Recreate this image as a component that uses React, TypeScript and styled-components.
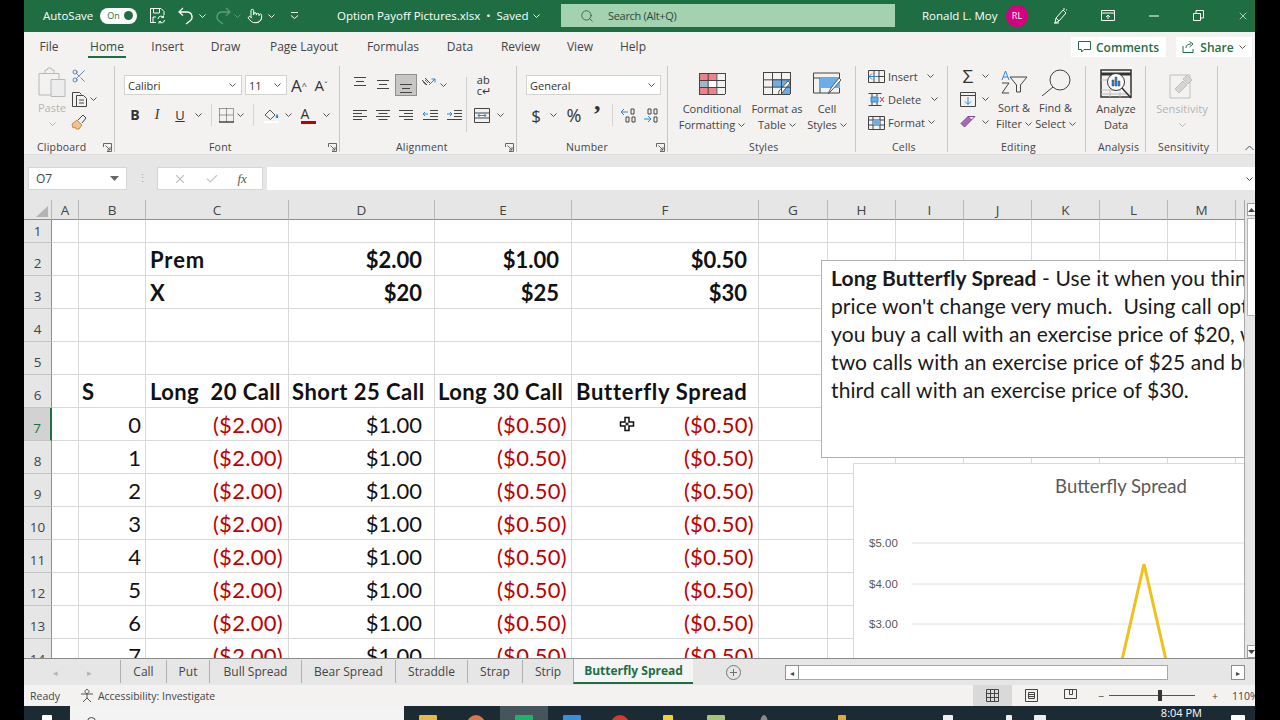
import styled, { createGlobalStyle } from "styled-components";
import { Check, Plus, Pointer, Scissors, Search, X } from "lucide-react";
import type { ReactNode } from "react";

const Global = createGlobalStyle`
html, body { margin: 0; padding: 0; background: #000; }
* { box-sizing: border-box; }
`;

const ui = `"Open Sans", "Noto Sans", "Liberation Sans", sans-serif`;
const sheetFont = `Lato, "Open Sans", sans-serif`;

const Screen = styled.div`
  width: 1280px;
  height: 720px;
  background: #000;
  padding: 0 25px 0 24px;
  overflow: hidden;
  font-family: ${ui};
`;

const Excel = styled.div`
  display: flex;
  flex-direction: column;
  width: 1231px;
  height: 720px;
  background: #f3f2f1;
`;

/* title bar */
const TitleBar = styled.div`
  display: flex;
  align-items: center;
  flex: 0 0 32px;
  padding-bottom: 1px;
  background: #1f6e43;
  color: #fff;
  font-size: 11.5px;
`;

const QuickAccess = styled.div`
  display: flex;
  align-items: center;
  width: 313px;
  padding-left: 19px;
`;

const Toggle = styled.div`
  display: flex;
  align-items: center;
  justify-content: space-between;
  width: 37px;
  height: 16px;
  margin: 0 12px 0 7px;
  padding: 0 4px 0 7px;
  border-radius: 8px;
  background: #fff;
  color: #1f6e43;
  font-size: 9px;
`;

const ToggleKnob = styled.span`
  width: 9px;
  height: 9px;
  border-radius: 50%;
  background: #1f6e43;
`;

const Slot = styled.div<{ $w: number; $ml?: number }>`
  display: flex;
  align-items: center;
  justify-content: center;
  flex: 0 0 ${(p) => p.$w}px;
  width: ${(p) => p.$w}px;
  margin-left: ${(p) => p.$ml ?? 0}px;
`;

const FileName = styled.div`
  display: flex;
  align-items: center;
  gap: 5px;
  width: 224px;
  white-space: pre;
`;

const SearchBox = styled.div`
  display: flex;
  align-items: center;
  gap: 14px;
  width: 334px;
  height: 23px;
  padding-left: 19px;
  background: #a3d2b1;
  color: #2c4a38;
  font-size: 11px;
  letter-spacing: -0.3px;
`;

const UserName = styled.div`
  width: 84px;
  margin-left: 27px;
  white-space: nowrap;
`;

const Avatar = styled.div`
  display: flex;
  align-items: center;
  justify-content: center;
  width: 22px;
  height: 22px;
  border-radius: 50%;
  background: #d6007f;
  font-size: 9px;
`;

/* tabs */
const TabRow = styled.div`
  display: flex;
  flex: 0 0 30px;
  padding-top: 5px;
  color: #444;
  font-size: 12px;
`;

const Tab = styled.div<{ $w: number; $active?: boolean }>`
  width: ${(p) => p.$w}px;
  height: 21px;
  padding-top: 1px;
  text-align: center;
  color: ${(p) => (p.$active ? "#2f4f3c" : "#444")};
  font-weight: ${(p) => (p.$active ? 500 : 400)};
  white-space: nowrap;
`;

const ActiveMark = styled.div`
  width: 38px;
  height: 2px;
  margin: 1px auto 0;
  background: #1f6e43;
`;

const TabActions = styled.div`
  display: flex;
  gap: 10px;
  margin-left: auto;
  padding-right: 3px;
`;

const ActionButton = styled.div<{ $w: number }>`
  display: flex;
  align-items: center;
  justify-content: center;
  gap: 5px;
  width: ${(p) => p.$w}px;
  height: 20px;
  background: #fff;
  color: #1f6e43;
  font-size: 12px;
  font-weight: 600;
`;

/* ribbon */
const Ribbon = styled.div`
  display: flex;
  flex: 0 0 93px;
  color: #444;
  font-size: 11px;
  border-bottom: 1px solid #dcdcdc;
`;

const Group = styled.div<{ $w: number }>`
  position: relative;
  display: flex;
  flex-direction: column;
  flex: 0 0 ${(p) => p.$w}px;
  &::after {
    content: "";
    position: absolute;
    right: 0;
    top: 4px;
    bottom: 2px;
    width: 1px;
    background: #c8c8c8;
  }
`;

const GroupBody = styled.div<{ $pl?: number; $pt?: number }>`
  display: flex;
  flex: 1;
  padding: ${(p) => p.$pt ?? 4}px 0 0 ${(p) => p.$pl ?? 0}px;
`;

const GroupLabel = styled.div<{ $left: number }>`
  display: grid;
  grid-template-columns: ${(p) => p.$left}px auto 1fr;
  align-items: center;
  height: 18px;
  padding: 4px 3px 0 0;
  font-size: 10.5px;
  letter-spacing: 0.2px;
  color: #444;
`;

const LabelEnd = styled.span`
  display: flex;
  justify-content: flex-end;
`;

const Rows = styled.div<{ $gap?: number }>`
  display: flex;
  flex-direction: column;
  gap: ${(p) => p.$gap ?? 0}px;
`;

const Row = styled.div`
  display: flex;
  align-items: center;
  height: 22px;
`;

const Tool = styled.div<{ $w: number; $on?: boolean }>`
  display: flex;
  align-items: center;
  justify-content: center;
  flex: 0 0 ${(p) => p.$w}px;
  height: 22px;
  background: ${(p) => (p.$on ? "#c8c6c4" : "transparent")};
  border: ${(p) => (p.$on ? "1px solid #8f8f8f" : "none")};
`;

const ToolText = styled.span<{ $size?: number; $bold?: boolean; $italic?: boolean; $under?: boolean; $font?: string }>`
  font-family: ${(p) => p.$font ?? ui};
  font-size: ${(p) => p.$size ?? 12}px;
  font-weight: ${(p) => (p.$bold ? 700 : 400)};
  font-style: ${(p) => (p.$italic ? "italic" : "normal")};
  text-decoration: ${(p) => (p.$under ? "underline" : "none")};
  color: #333;
  line-height: 1;
`;

const Divider = styled.div<{ $w: number }>`
  display: flex;
  justify-content: center;
  flex: 0 0 ${(p) => p.$w}px;
  height: 22px;
  &::before {
    content: "";
    width: 1px;
    background: #d4d4d4;
  }
`;

const VDivider = styled.div`
  width: 1px;
  height: 55px;
  margin-top: 3px;
  background: #d0d0d0;
`;

const Select = styled.div<{ $w: number; $ml?: number }>`
  display: flex;
  align-items: center;
  justify-content: space-between;
  flex: 0 0 ${(p) => p.$w}px;
  height: 20px;
  margin-left: ${(p) => p.$ml ?? 0}px;
  padding: 0 5px 0 3px;
  background: #fff;
  border: 1px solid #d2d2d2;
  font-size: 11px;
  color: #333;
`;

const LargeButton = styled.div<{ $w: number; $muted?: boolean }>`
  display: flex;
  flex-direction: column;
  align-items: center;
  flex: 0 0 ${(p) => p.$w}px;
  min-width: 0;
  color: ${(p) => (p.$muted ? "#b4b4b4" : "#444")};
  font-size: 11px;
  line-height: 16px;
  white-space: nowrap;
`;

const LargeIcon = styled.div`
  display: flex;
  align-items: center;
  justify-content: center;
  height: 35px;
`;

const TextLine = styled.div`
  display: flex;
  align-items: center;
  gap: 3px;
  height: 16px;
`;

const SmallAction = styled.div`
  display: flex;
  align-items: center;
  gap: 3px;
  height: 22px;
  white-space: nowrap;
`;

const CollapseSlot = styled.div`
  display: flex;
  align-items: flex-end;
  justify-content: flex-end;
  flex: 1;
  padding: 0 1px 3px 0;
`;

/* formula bar */
const FormulaBar = styled.div`
  display: flex;
  align-items: flex-start;
  flex: 0 0 45px;
  padding: 12px 0 0 4px;
  background: #e6e6e6;
`;

const NameBox = styled.div`
  display: flex;
  align-items: center;
  justify-content: space-between;
  width: 99px;
  height: 23px;
  padding: 0 7px;
  background: #fff;
  border: 1px solid #d6d6d6;
  font-size: 12px;
  color: #444;
`;

const Grip = styled.div`
  width: 30px;
  height: 23px;
  text-align: center;
  line-height: 21px;
  color: #a8a8a8;
  font-size: 11px;
`;

const FxButtons = styled.div`
  display: flex;
  align-items: center;
  justify-content: space-around;
  width: 106px;
  height: 23px;
  padding: 0 6px;
  background: #fff;
  border: 1px solid #d6d6d6;
`;

const FxLabel = styled.span`
  font-family: "Liberation Serif", serif;
  font-style: italic;
  font-size: 13px;
  color: #555;
`;

const FormulaInput = styled.div`
  display: flex;
  align-items: center;
  justify-content: flex-end;
  flex: 1;
  height: 23px;
  margin-left: 4px;
  padding-right: 2px;
  background: #fff;
`;

/* sheet */
const SheetArea = styled.div`
  display: flex;
  flex: 0 0 458px;
  background: #e6e6e6;
`;

const SheetViewport = styled.div`
  position: relative;
  width: 1221px;
  height: 458px;
  overflow: hidden;
  background: #fff;
  border-right: 1px solid #a8a8a8;
`;

const SheetGrid = styled.div`
  display: grid;
  grid-template-columns: 28px 27px 67px 143px 146px 137px 187px 69px 68px 68px 68px 68px 68px 68px 9px;
  grid-template-rows: 20px 23px repeat(13, 33px);
`;

const Corner = styled.div`
  display: flex;
  align-items: flex-end;
  justify-content: flex-end;
  padding: 0 3px 2px 0;
  background: #e6e6e6;
  border-right: 1px solid #b8b8b8;
  border-bottom: 1px solid #8f8f8f;
`;

const ColHead = styled.div`
  display: flex;
  align-items: center;
  justify-content: center;
  background: #e6e6e6;
  border-right: 1px solid #b8b8b8;
  border-bottom: 1px solid #8f8f8f;
  font-size: 13.5px;
  color: #444;
`;

const RowHead = styled.div<{ $current?: boolean; $short?: boolean }>`
  display: flex;
  align-items: center;
  justify-content: center;
  padding-top: ${(p) => (p.$short ? 0 : 7)}px;
  background: ${(p) => (p.$current ? "#d2d2d2" : "#e6e6e6")};
  border-right: ${(p) => (p.$current ? "2px solid #1f6e43" : "1px solid #8f8f8f")};
  border-bottom: 1px solid #c4c4c4;
  font-size: 13.5px;
  color: ${(p) => (p.$current ? "#1f6e43" : "#444")};
`;

const Cell = styled.div<{ $align?: string; $pad?: number; $bold?: boolean; $red?: boolean; $track?: number }>`
  display: flex;
  align-items: center;
  justify-content: ${(p) => (p.$align === "right" ? "flex-end" : "flex-start")};
  padding: 0 ${(p) => p.$pad ?? 0}px;
  border-right: 1px solid #d9d9d9;
  border-bottom: 1px solid #d9d9d9;
  font-family: ${sheetFont};
  font-size: 22px;
  font-weight: ${(p) => (p.$bold ? 700 : 400)};
  letter-spacing: ${(p) => p.$track ?? 0}px;
  color: ${(p) => (p.$red ? "#c00000" : "#111")};
  white-space: pre;
  font-variant-numeric: tabular-nums;
`;

const NoteBox = styled.div`
  position: absolute;
  left: 797px;
  top: 60px;
  width: 440px;
  height: 198px;
  padding: 3px 9px;
  background: #fff;
  border: 1px solid #b0b0b0;
  font-family: ${sheetFont};
  font-size: 21px;
  letter-spacing: 0.1px;
  line-height: 28px;
  color: #1a1a1a;
  white-space: pre;
`;

const NoteLead = styled.b`
  font-weight: 700;
`;

const ChartBox = styled.div`
  position: absolute;
  left: 829px;
  top: 263px;
  width: 420px;
  height: 200px;
  background: #fff;
  border: 1px solid #d9d9d9;
`;

const ChartTitle = styled.div`
  width: 534px;
  margin-top: 9px;
  text-align: center;
  font-family: ${sheetFont};
  font-size: 18.5px;
  line-height: 26px;
  color: #595959;
`;

const ChartPlot = styled.svg`
  display: block;
  margin-top: 1px;
`;

const CursorMark = styled.div`
  position: absolute;
  left: 595px;
  top: 215px;
  width: 16px;
  height: 16px;
`;

const VScroll = styled.div`
  display: flex;
  flex-direction: column;
  justify-content: space-between;
  flex: 1;
  padding: 3px 0 0 2px;
`;

const ScrollTop = styled.div`
  display: flex;
  flex-direction: column;
  gap: 2px;
`;

const ScrollButton = styled.div`
  display: flex;
  align-items: center;
  justify-content: center;
  height: 13px;
  background: #fff;
  border: 1px solid #a0a0a0;
  border-right: none;
`;

const ScrollThumb = styled.div`
  height: 98px;
  background: #fff;
  border: 1px solid #b4b4b4;
  border-right: none;
`;

/* sheet tabs */
const SheetTabs = styled.div`
  display: flex;
  align-items: stretch;
  flex: 0 0 27px;
  background: #e6e6e6;
  border-top: 1px solid #8a8a8a;
  font-size: 12px;
  color: #444;
`;

const TabNav = styled.div`
  display: flex;
  align-items: center;
  justify-content: space-around;
  width: 96px;
  padding: 0 14px;
  color: #b4b4b4;
  font-size: 9px;
`;

const SheetTab = styled.div<{ $w: number; $active?: boolean }>`
  display: flex;
  align-items: center;
  justify-content: center;
  width: ${(p) => p.$w}px;
  height: ${(p) => (p.$active ? "25px" : "23px")};
  margin-top: ${(p) => (p.$active ? "0" : "1px")};
  background: ${(p) => (p.$active ? "#f5f5f5" : "transparent")};
  border-left: 1px solid #b0b0b0;
  border-bottom: ${(p) => (p.$active ? "2px solid #1f6e43" : "none")};
  color: ${(p) => (p.$active ? "#1f6e43" : "#444")};
  font-weight: ${(p) => (p.$active ? 700 : 400)};
  white-space: nowrap;
`;

const AddSheet = styled.div`
  display: flex;
  align-items: center;
  justify-content: center;
  width: 80px;
`;

const AddCircle = styled.div`
  display: flex;
  align-items: center;
  justify-content: center;
  width: 15px;
  height: 15px;
  border: 1px solid #777;
  border-radius: 50%;
  color: #666;
`;

const HScroll = styled.div`
  display: flex;
  align-items: center;
  width: 460px;
  height: 15px;
  margin: 6px 0 0 12px;
`;

const HButton = styled.div`
  display: flex;
  align-items: center;
  justify-content: center;
  flex: 0 0 14px;
  height: 15px;
  background: #fff;
  border: 1px solid #8f8f8f;
  font-size: 8px;
  color: #444;
`;

const HThumb = styled.div`
  flex: 0 0 369px;
  height: 15px;
  background: #fff;
  border: 1px solid #a8a8a8;
  border-left: none;
`;

const HTrack = styled.div`
  flex: 1;
`;

/* status bar */
const StatusBar = styled.div`
  display: flex;
  align-items: center;
  flex: 0 0 21px;
  padding-left: 6px;
  background: #f3f2f1;
  font-size: 10.5px;
  color: #444;
`;

const Accessibility = styled.div`
  display: flex;
  align-items: center;
  gap: 4px;
  margin-left: 20px;
`;

const StatusRight = styled.div`
  display: flex;
  align-items: center;
  height: 21px;
  margin-left: auto;
  white-space: nowrap;
`;

const ViewButton = styled.div<{ $on?: boolean }>`
  display: flex;
  align-items: center;
  justify-content: center;
  width: 39px;
  height: 21px;
  background: ${(p) => (p.$on ? "#d9d9d9" : "transparent")};
`;

const Zoomer = styled.div`
  display: flex;
  align-items: center;
  gap: 5px;
  width: 133px;
  padding-left: 8px;
`;

const ZoomTrack = styled.div`
  position: relative;
  width: 86px;
  height: 1px;
  background: #555;
`;

const ZoomThumb = styled.span`
  position: absolute;
  left: 49px;
  top: -5px;
  width: 4px;
  height: 11px;
  background: #333;
`;

const ZoomPlus = styled.span`
  margin-left: 12px;
`;

const ZoomValue = styled.div`
  width: 23px;
  margin-left: 9px;
  overflow: hidden;
  font-size: 10.5px;
`;

/* windows taskbar */
const Taskbar = styled.div`
  display: flex;
  flex: 0 0 14px;
  height: 14px;
  background: #1b2a33;
  overflow: hidden;
`;

const TaskSlot = styled.div<{ $w: number; $on?: boolean }>`
  display: flex;
  justify-content: center;
  flex: 0 0 ${(p) => p.$w}px;
  padding-top: 9px;
  background: ${(p) => (p.$on ? "#46545c" : "transparent")};
`;

const TaskIcon = styled.span<{ $c: string; $round?: boolean; $w?: number }>`
  display: block;
  width: ${(p) => p.$w ?? 18}px;
  height: 18px;
  background: ${(p) => p.$c};
  border-radius: ${(p) => (p.$round ? "50%" : "1px")};
`;

const TaskSearch = styled.div`
  display: flex;
  padding: 11px 0 0 17px;
  width: 334px;
  background: #f3f3f3;
`;

const TaskSearchGlass = styled.span`
  width: 9px;
  height: 9px;
  border: 1px solid #444;
  border-radius: 50%;
`;

const Clock = styled.div`
  flex: 0 0 auto;
  margin: 0 19px 0 auto;
  color: #fff;
  font-size: 11px;
  line-height: 14px;
`;

const Ic = ({ w, h, c = "#444", sw = 1, children }: { w: number; h: number; c?: string; sw?: number; children: ReactNode }) => (
  <svg width={w} height={h} viewBox={`0 0 ${w} ${h}`} fill="none" stroke={c} strokeWidth={sw}>
    {children}
  </svg>
);

const Chev = ({ c = "#555" }: { c?: string }) => (
  <Ic w={7} h={4} c={c}>
    <path d="M.5.5l3 3 3-3" />
  </Ic>
);

const Launcher = () => (
  <Ic w={9} h={9} c="#666">
    <path d="M.5 4V.5H8.5V8.5H4M2.5 2.5L7 7M7 4v3H4" />
  </Ic>
);

const Lines = ({ kind }: { kind: "left" | "center" | "right" }) => {
  const x = (len: number) => (kind === "left" ? 0 : kind === "right" ? 14 - len : (14 - len) / 2);
  return (
    <Ic w={14} h={12}>
      {[14, 9, 14, 9].map((len, i) => (
        <path key={i} d={`M${x(len)} ${1.5 + i * 3}h${len}`} />
      ))}
    </Ic>
  );
};

const VLines = ({ at }: { at: number }) => (
  <Ic w={16} h={18}>
    <path d={`M2 ${at + 0.5}h12M4 ${at + 4.5}h8M2 ${at + 8.5}h12`} />
  </Ic>
);

const IndentIcon = ({ flip }: { flip?: boolean }) => (
  <Ic w={15} h={12}>
    <path d="M7 1.5h8M7 4.5h8M7 7.5h8M0 10.5h15" />
    <path d={flip ? "M0 5h5M3 3l2 2-2 2" : "M5 5H0M2 3L0 5l2 2"} stroke="#2b88d8" />
  </Ic>
);

const TableIcon = ({ w, h, children }: { w: number; h: number; children?: ReactNode }) => {
  const rows = [0, 1, 2, 3].map((i) => (h * i) / 3);
  const cols = [0, 1, 2, 3].map((i) => (w * i) / 3);
  return (
    <Ic w={w + 1} h={h + 1} c="#444">
      {children}
      {rows.map((y) => (
        <path key={y} d={`M0 ${y + 0.5}h${w}`} />
      ))}
      {cols.map((x) => (
        <path key={x} d={`M${x + 0.5} 0v${h}`} />
      ))}
    </Ic>
  );
};

const columnLetters = ["A", "B", "C", "D", "E", "F", "G", "H", "I", "J", "K", "L", "M", ""];
const bodyRows = [7, 8, 9, 10, 11, 12, 13, 14];

type CellDef = { text: string; align?: string; pad?: number; bold?: boolean; red?: boolean; track?: number };

const rowCells = (row: number): Record<number, CellDef> => {
  if (row === 2)
    return {
      2: { text: "Prem", pad: 4, bold: true, track: 0.9 },
      3: { text: "$2.00", align: "right", pad: 12, bold: true },
      4: { text: "$1.00", align: "right", pad: 12, bold: true },
      5: { text: "$0.50", align: "right", pad: 11, bold: true },
    };
  if (row === 3)
    return {
      2: { text: "X", pad: 4, bold: true },
      3: { text: "$20", align: "right", pad: 12, bold: true },
      4: { text: "$25", align: "right", pad: 12, bold: true },
      5: { text: "$30", align: "right", pad: 11, bold: true },
    };
  if (row === 6)
    return {
      1: { text: "S", pad: 3, bold: true },
      2: { text: "Long  20 Call", pad: 4, bold: true, track: 0.4 },
      3: { text: "Short 25 Call", pad: 3, bold: true, track: 0.5 },
      4: { text: "Long 30 Call", pad: 3, bold: true, track: 0.4 },
      5: { text: "Butterfly Spread", pad: 4, bold: true, track: 0.7 },
    };
  if (row >= 7)
    return {
      1: { text: String(row - 7), align: "right", pad: 4 },
      2: { text: "($2.00)", align: "right", pad: 5, red: true, track: 0.3 },
      3: { text: "$1.00", align: "right", pad: 12 },
      4: { text: "($0.50)", align: "right", pad: 4, red: true, track: 0.3 },
      5: { text: "($0.50)", align: "right", pad: 4, red: true, track: 0.3 },
    };
  return {};
};

const allRows = [1, 2, 3, 4, 5, 6, ...bodyRows];
const sheetTabs: [string, number][] = [
  ["Call", 46],
  ["Put", 43],
  ["Bull Spread", 92],
  ["Bear Spread", 94],
  ["Straddle", 72],
  ["Strap", 55],
  ["Strip", 51],
];

export default function App() {
  return (
    <Screen>
      <Global />
      <Excel>
        <TitleBar>
          <QuickAccess>
            AutoSave
            <Toggle>
              On
              <ToggleKnob />
            </Toggle>
            <Slot $w={17}>
              <Ic w={17} h={17} c="#fff">
                <path d="M7 15.5H1.5V1.5H12l3 3V8M4.5 1.5V6h6V1.5M4 15.5V10h3" />
                <path d="M9 12a3 3 0 0 1 5.5-1.5M15.5 13a3 3 0 0 1-5.5 1.5M14.5 8.5v2h-2M10 16.5v-2h2" />
              </Ic>
            </Slot>
            <Slot $w={16} $ml={12}>
              <Ic w={16} h={18} c="#fff" sw={1.3}>
                <path d="M5 1L1 5l4 3.5M1 5h8c5 0 6.5 6 3.5 8.5L8 17" />
              </Ic>
            </Slot>
            <Slot $w={11} $ml={3}>
              <Chev c="#fff" />
            </Slot>
            <Slot $w={16} $ml={7}>
              <Ic w={16} h={18} c="#5f9b7b" sw={1.3}>
                <path d="M11 1l4 4-4 3.5M15 5H7C2 5 .5 11 3.5 13.5L8 17" />
              </Ic>
            </Slot>
            <Slot $w={7} $ml={3}>
              <Chev c="#5f9b7b" />
            </Slot>
            <Slot $w={16} $ml={6}>
              <Pointer size={16} strokeWidth={1.5} />
            </Slot>
            <Slot $w={7} $ml={5}>
              <Chev c="#fff" />
            </Slot>
            <Slot $w={9} $ml={15}>
              <Ic w={9} h={8} c="#fff">
                <path d="M1 .5h7M1 3.5l3.5 3 3.5-3" />
              </Ic>
            </Slot>
          </QuickAccess>
          <FileName>
            Option Payoff Pictures.xlsx  •  Saved
            <Chev c="#fff" />
          </FileName>
          <SearchBox>
            <Search size={14} color="#3d5c49" strokeWidth={1.5} />
            Search (Alt+Q)
          </SearchBox>
          <UserName>Ronald L. Moy</UserName>
          <Avatar>RL</Avatar>
          <Slot $w={16} $ml={24}>
            <Ic w={15} h={17} c="#fff">
              <path d="M2 16l1-5 7-8 3 3-7 8zM3 11l3 3M11 1v2M14 3h-1M1 16h5" />
            </Ic>
          </Slot>
          <Slot $w={14} $ml={33}>
            <Ic w={14} h={11} c="#fff">
              <path d="M.5.5h13v10H.5zM.5 3h13M7 9V5M5 7l2-2 2 2" />
            </Ic>
          </Slot>
          <Slot $w={12} $ml={33}>
            <Ic w={10} h={2} c="#fff">
              <path d="M0 1h10" />
            </Ic>
          </Slot>
          <Slot $w={11} $ml={33}>
            <Ic w={11} h={11} c="#fff">
              <path d="M.5 3.5h7v7h-7zM3 3.5V.5h7.5V8H7.5" />
            </Ic>
          </Slot>
          <Slot $w={12} $ml={33}>
            <X size={14} strokeWidth={1.3} />
          </Slot>
        </TitleBar>

        <TabRow>
          <Tab $w={50}>File</Tab>
          <Tab $w={66} $active>
            Home
            <ActiveMark />
          </Tab>
          <Tab $w={55}>Insert</Tab>
          <Tab $w={61}>Draw</Tab>
          <Tab $w={96}>Page Layout</Tab>
          <Tab $w={82}>Formulas</Tab>
          <Tab $w={52}>Data</Tab>
          <Tab $w={69}>Review</Tab>
          <Tab $w={50}>View</Tab>
          <Tab $w={56}>Help</Tab>
          <TabActions>
            <ActionButton $w={95}>
              <Ic w={13} h={12} c="#1f6e43">
                <path d="M.5.5h12v8H6L3.5 11V8.5h-3z" />
              </Ic>
              Comments
            </ActionButton>
            <ActionButton $w={76}>
              <Ic w={13} h={12} c="#1f6e43">
                <path d="M1 5v6.500h10V8M4 7c0-3 2-4 5-4M7.5.5L11 3 7.5 6" />
              </Ic>
              Share
              <Chev />
            </ActionButton>
          </TabActions>
        </TabRow>

        <Ribbon>
          <Group $w={91}>
            <GroupBody $pl={11} $pt={3}>
              <LargeButton $w={34} $muted>
                <LargeIcon>
                  <Ic w={28} h={31} c="#b8b8b8">
                    <path d="M1 6.5h20V28H1zM7 6.5V3h2l1-2h3l1 2h2v3.500z" />
                    <path d="M13 12.5h14v17H13z" fill="#ededed" />
                  </Ic>
                </LargeIcon>
                <TextLine>Paste</TextLine>
                <TextLine>
                  <Chev c="#b4b4b4" />
                </TextLine>
              </LargeButton>
              <Rows $gap={1}>
                <Row>
                  <Tool $w={20}>
                    <Scissors size={16} color="#3a6fa0" strokeWidth={1.2} />
                  </Tool>
                </Row>
                <Row>
                  <Tool $w={20}>
                    <Ic w={17} h={17}>
                      <path d="M5.5 15.5H1.5V1.5h7l2 2M5.5 4.5h7l3 3v8h-10zM8 9h5M8 12h5" />
                    </Ic>
                  </Tool>
                  <Tool $w={8}>
                    <Chev />
                  </Tool>
                </Row>
                <Row>
                  <Tool $w={20}>
                    <Ic w={16} h={16}>
                      <path d="M1 10l5-4 5 5-3 4H5l-1-2-2 1z" fill="#f4c18c" stroke="#d08a3c" />
                      <path d="M7 6l5-5 3 3-4 5" />
                    </Ic>
                  </Tool>
                </Row>
              </Rows>
            </GroupBody>
            <GroupLabel $left={13}>
              <span />
              Clipboard
              <LabelEnd>
                <Launcher />
              </LabelEnd>
            </GroupLabel>
          </Group>

          <Group $w={225}>
            <GroupBody $pl={9} $pt={12}>
              <Rows $gap={8}>
                <Row>
                  <Select $w={118}>
                    Calibri
                    <Chev />
                  </Select>
                  <Select $w={42} $ml={3}>
                    11
                    <Chev />
                  </Select>
                  <Tool $w={24}>
                    <ToolText $size={17}>A</ToolText>
                    <ToolText $size={9}>^</ToolText>
                  </Tool>
                  <Tool $w={20}>
                    <ToolText $size={15}>A</ToolText>
                    <ToolText $size={9}>ˇ</ToolText>
                  </Tool>
                </Row>
                <Row>
                  <Tool $w={22}>
                    <ToolText $size={14} $bold>
                      B
                    </ToolText>
                  </Tool>
                  <Tool $w={22}>
                    <ToolText $size={14} $italic $font={`"Liberation Serif", serif`}>
                      I
                    </ToolText>
                  </Tool>
                  <Tool $w={24}>
                    <ToolText $size={13} $under>
                      U
                    </ToolText>
                  </Tool>
                  <Tool $w={12}>
                    <Chev />
                  </Tool>
                  <Divider $w={14} />
                  <Tool $w={16}>
                    <Ic w={15} h={15}>
                      <path d="M.5.5h14M.5 7h14M7.5.5v14M.5.5v14M14.5.5v14" strokeDasharray="1 1" />
                      <path d="M0 14h15" strokeWidth={1.5} />
                    </Ic>
                  </Tool>
                  <Tool $w={12}>
                    <Chev />
                  </Tool>
                  <Divider $w={14} />
                  <Tool $w={22}>
                    <Ic w={15} h={15} c="#555">
                      <path d="M1 7l5-5 5 5-4.5 4.5z" />
                      <path d="M13 6.5l1 3h-2z" fill="#2b88d8" stroke="#2b88d8" />
                      <path d="M0 14h15" stroke="#fff" strokeWidth={2} />
                    </Ic>
                  </Tool>
                  <Tool $w={12}>
                    <Chev />
                  </Tool>
                  <Tool $w={28}>
                    <Rows>
                      <ToolText $size={14}>A</ToolText>
                      <Ic w={15} h={3} c="#c00000" sw={3}>
                        <path d="M0 1.5h15" />
                      </Ic>
                    </Rows>
                  </Tool>
                  <Tool $w={8}>
                    <Chev />
                  </Tool>
                </Row>
              </Rows>
            </GroupBody>
            <GroupLabel $left={94}>
              <span />
              Font
              <LabelEnd>
                <Launcher />
              </LabelEnd>
            </GroupLabel>
          </Group>

          <Group $w={177}>
            <GroupBody $pl={8} $pt={12}>
              <Rows $gap={8}>
                <Row>
                  <Tool $w={23}>
                    <VLines at={1} />
                  </Tool>
                  <Tool $w={23}>
                    <VLines at={4} />
                  </Tool>
                  <Tool $w={1} />
                  <Tool $w={22} $on>
                    <VLines at={8} />
                  </Tool>
                  <Tool $w={1} />
                  <Tool $w={22}>
                    <Ic w={16} h={16}>
                      <path d="M4 3l3 3M2 5l3 3M8 8l6-6M10.5 2H14v3.5" stroke="#2b88d8" />
                      <path d="M1 3l5 5M4 1L9 6" />
                    </Ic>
                  </Tool>
                  <Tool $w={7}>
                    <Chev />
                  </Tool>
                </Row>
                <Row>
                  <Tool $w={23}>
                    <Lines kind="left" />
                  </Tool>
                  <Tool $w={23}>
                    <Lines kind="center" />
                  </Tool>
                  <Tool $w={24}>
                    <Lines kind="right" />
                  </Tool>
                  <Tool $w={24}>
                    <IndentIcon />
                  </Tool>
                  <Tool $w={24}>
                    <IndentIcon flip />
                  </Tool>
                </Row>
              </Rows>
              <VDivider />
              <Rows $gap={8}>
                <Row>
                  <Tool $w={34}>
                    <ToolText $size={11}>
                      ab
                      <br />
                      c↵
                    </ToolText>
                  </Tool>
                </Row>
                <Row>
                  <Tool $w={29}>
                    <Ic w={16} h={15}>
                      <path d="M.5.5h15v14H.5zM.5 5h15M.5 10h15" />
                      <path d="M4 7.5h8M6 5.5l-2 2 2 2M10 5.5l2 2-2 2" stroke="#2b88d8" fill="#cfe4f7" />
                    </Ic>
                  </Tool>
                  <Tool $w={8}>
                    <Chev />
                  </Tool>
                </Row>
              </Rows>
            </GroupBody>
            <GroupLabel $left={56}>
              <span />
              Alignment
              <LabelEnd>
                <Launcher />
              </LabelEnd>
            </GroupLabel>
          </Group>

          <Group $w={151}>
            <GroupBody $pl={9} $pt={12}>
              <Rows $gap={8}>
                <Row>
                  <Select $w={135}>
                    General
                    <Chev />
                  </Select>
                </Row>
                <Row>
                  <Tool $w={20}>
                    <ToolText $size={17}>$</ToolText>
                  </Tool>
                  <Tool $w={14}>
                    <Chev />
                  </Tool>
                  <Tool $w={28}>
                    <ToolText $size={18}>%</ToolText>
                  </Tool>
                  <Tool $w={18}>
                    <ToolText $size={26} $bold $font={`"Liberation Serif", serif`}>
                      ’
                    </ToolText>
                  </Tool>
                  <Divider $w={12} />
                  <Tool $w={22}>
                    <Ic w={17} h={15}>
                      <path d="M0 4h7M3 1L0 4l3 3" stroke="#2b88d8" />
                      <path d="M10 1h3v5h-3zM5 9h3v5H5zM11 9h3v5h-3z" />
                    </Ic>
                  </Tool>
                  <Tool $w={22}>
                    <Ic w={17} h={15}>
                      <path d="M1 11h7M5 8l3 3-3 3" stroke="#2b88d8" />
                      <path d="M5 1h3v5H5zM11 1h3v5h-3zM11 9h3v5h-3z" />
                    </Ic>
                  </Tool>
                </Row>
              </Rows>
            </GroupBody>
            <GroupLabel $left={49}>
              <span />
              Number
              <LabelEnd>
                <Launcher />
              </LabelEnd>
            </GroupLabel>
          </Group>

          <Group $w={188}>
            <GroupBody $pl={12}>
              <LargeButton $w={64}>
                <LargeIcon>
                  <TableIcon w={26} h={21}>
                    <path d="M0 0h17v7H9v7H0z" fill="#f0808a" stroke="none" />
                    <path d="M0 14h17v7H0z" fill="#f0808a" stroke="none" />
                    <path d="M9 7h8v7H9z" fill="#fff" stroke="none" />
                    <path d="M0 7h9v7H0z" fill="#9fb6c8" stroke="none" />
                  </TableIcon>
                </LargeIcon>
                <TextLine>Conditional</TextLine>
                <TextLine>
                  Formatting
                  <Chev />
                </TextLine>
              </LargeButton>
              <LargeButton $w={66}>
                <LargeIcon>
                  <TableIcon w={27} h={22}>
                    <path d="M9 7h9v8H9zM18 7h9v15h-9z" fill="#6aaee8" stroke="none" />
                    <path d="M15 27l4-6 8-10-2-2-9 10z" fill="#fff" stroke="#555" />
                  </TableIcon>
                </LargeIcon>
                <TextLine>Format as</TextLine>
                <TextLine>
                  Table
                  <Chev />
                </TextLine>
              </LargeButton>
              <LargeButton $w={34}>
                <LargeIcon>
                  <Ic w={28} h={24}>
                    <path d="M.5 1h26v20H.5zM.5 6h26M7 6v15" />
                    <path d="M7 6h20v10H7z" fill="#6aaee8" stroke="none" />
                    <path d="M15 22l3-6 8-10 2 2-9 10z" fill="#fff" stroke="#555" />
                  </Ic>
                </LargeIcon>
                <TextLine>Cell</TextLine>
                <TextLine>
                  Styles
                  <Chev />
                </TextLine>
              </LargeButton>
            </GroupBody>
            <GroupLabel $left={81}>
              <span />
              Styles
              <LabelEnd />
            </GroupLabel>
          </Group>

          <Group $w={92}>
            <GroupBody $pl={12} $pt={3}>
              <Rows $gap={1}>
                <SmallAction>
                  <Ic w={17} h={15}>
                    <path d="M.5 1.5h16v12H.5zM6 1.5v12M11 1.5v12M.5 7.5h16" />
                    <path d="M1 7.5h9M4 4.5l-3 3 3 3" stroke="#2b88d8" />
                  </Ic>
                  Insert
                  <Tool $w={20}>
                    <Chev />
                  </Tool>
                </SmallAction>
                <SmallAction>
                  <Ic w={17} h={15}>
                    <path d="M.5 1.5h13M.5 13.5h13M4 1.5v12M9 1.5v3M9 10v3.5" />
                    <path d="M3 5h7v5H3z" fill="#6aaee8" stroke="#2b88d8" />
                    <path d="M12 5l4 5M16 5l-4 5" stroke="#d13438" />
                  </Ic>
                  Delete
                  <Tool $w={20}>
                    <Chev />
                  </Tool>
                </SmallAction>
                <SmallAction>
                  <Ic w={17} h={16}>
                    <path d="M.5 2.5h16v13H.5zM.5 6h16M.5 11h16M5 2.5v13M12 2.5v13" />
                    <path d="M5 6h7v5H5z" fill="#6aaee8" stroke="none" />
                  </Ic>
                  Format
                  <Chev />
                </SmallAction>
              </Rows>
            </GroupBody>
            <GroupLabel $left={36}>
              <span />
              Cells
              <LabelEnd />
            </GroupLabel>
          </Group>

          <Group $w={138}>
            <GroupBody $pl={11} $pt={3}>
              <Rows $gap={1}>
                <Row>
                  <Tool $w={18}>
                    <ToolText $size={19}>Σ</ToolText>
                  </Tool>
                  <Tool $w={16}>
                    <Chev />
                  </Tool>
                </Row>
                <Row>
                  <Tool $w={18}>
                    <Ic w={16} h={15}>
                      <path d="M.5.5h15v14H.5zM.5 3.5h15" />
                      <path d="M8 5v7M5 9.5l3 3 3-3" stroke="#2b88d8" />
                    </Ic>
                  </Tool>
                  <Tool $w={16}>
                    <Chev />
                  </Tool>
                </Row>
                <Row>
                  <Tool $w={18}>
                    <Ic w={17} h={15}>
                      <path d="M1 8.5L8 1.5l3.5 3.5-7 7z" fill="#a66bb5" stroke="#7a4a8a" />
                      <path d="M8 1.5l7 0-3.5 3.5z" fill="#f1e6f5" stroke="#7a4a8a" />
                    </Ic>
                  </Tool>
                  <Tool $w={16}>
                    <Chev />
                  </Tool>
                </Row>
              </Rows>
              <LargeButton $w={42}>
                <LargeIcon>
                  <Ic w={28} h={25}>
                    <path d="M2 10L5.5 1 9 10M3 7h5" stroke="#2b88d8" />
                    <path d="M2 13h7l-7 10h7" />
                    <path d="M10 7h17l-6.5 8v7h-4v-7z" />
                  </Ic>
                </LargeIcon>
                <TextLine>Sort &amp;</TextLine>
                <TextLine>
                  Filter
                  <Chev />
                </TextLine>
              </LargeButton>
              <LargeButton $w={41}>
                <LargeIcon>
                  <Ic w={30} h={28}>
                    <circle cx="19" cy="11" r="10" />
                    <path d="M12 18L1 27" />
                  </Ic>
                </LargeIcon>
                <TextLine>Find &amp;</TextLine>
                <TextLine>
                  Select
                  <Chev />
                </TextLine>
              </LargeButton>
            </GroupBody>
            <GroupLabel $left={53}>
              <span />
              Editing
              <LabelEnd />
            </GroupLabel>
          </Group>

          <Group $w={60}>
            <GroupBody>
              <LargeButton $w={60}>
                <LargeIcon>
                  <Ic w={32} h={32} c="#333">
                    <path d="M1 2h30v27H1z" strokeWidth={1.5} />
                    <path d="M1 6h30" strokeWidth={3} />
                    <path d="M1 22h20M1 26h30M10 22v7M20 24v5M1 12h6" stroke="#bbb" />
                    <circle cx="16" cy="14" r="8.5" fill="#fff" />
                    <path d="M12 12h2v6h-2zM15 9h2v9h-2zM18 13h2v5h-2z" fill="#2b88d8" stroke="#444" strokeWidth={0.5} />
                    <path d="M22 20l9 10" strokeWidth={1.5} />
                  </Ic>
                </LargeIcon>
                <TextLine>Analyze</TextLine>
                <TextLine>Data</TextLine>
              </LargeButton>
            </GroupBody>
            <GroupLabel $left={12}>
              <span />
              Analysis
              <LabelEnd />
            </GroupLabel>
          </Group>

          <Group $w={72}>
            <GroupBody>
              <LargeButton $w={72} $muted>
                <LargeIcon>
                  <Ic w={26} h={30} c="#bfbfbf">
                    <path d="M1 6h20v23H1z" />
                    <path d="M6 20l8-8 4 4-8 8zM14 10l4-4 5 5-4 4z" fill="#d4d4d4" />
                  </Ic>
                </LargeIcon>
                <TextLine>Sensitivity</TextLine>
                <TextLine>
                  <Chev c="#b4b4b4" />
                </TextLine>
              </LargeButton>
            </GroupBody>
            <GroupLabel $left={12}>
              <span />
              Sensitivity
              <LabelEnd />
            </GroupLabel>
          </Group>

          <CollapseSlot>
            <Ic w={9} h={6} c="#555">
              <path d="M.5 5l4-4 4 4" />
            </Ic>
          </CollapseSlot>
        </Ribbon>

        <FormulaBar>
          <NameBox>
            O7
            <Ic w={9} h={5} c="#666">
              <path d="M0 0h9L4.5 5z" fill="#666" stroke="none" />
            </Ic>
          </NameBox>
          <Grip>⋮</Grip>
          <FxButtons>
            <X size={14} color="#c4c4c4" />
            <Check size={14} color="#c4c4c4" />
            <FxLabel>fx</FxLabel>
          </FxButtons>
          <FormulaInput>
            <Chev />
          </FormulaInput>
        </FormulaBar>

        <SheetArea>
          <SheetViewport>
            <SheetGrid>
              <Corner>
                <Ic w={12} h={11} c="#b4b4b4">
                  <path d="M12 0v11H0z" fill="#b4b4b4" stroke="none" />
                </Ic>
              </Corner>
              {columnLetters.map((letter, i) => (
                <ColHead key={i}>{letter}</ColHead>
              ))}
              {allRows.map((row) => {
                const cells = rowCells(row);
                return [
                  <RowHead key={`h${row}`} $current={row === 7} $short={row === 1}>
                    {row}
                  </RowHead>,
                  ...columnLetters.map((_, col) => {
                    const cell = cells[col];
                    return (
                      <Cell
                        key={`${row}-${col}`}
                        $align={cell?.align}
                        $pad={cell?.pad}
                        $bold={cell?.bold}
                        $red={cell?.red}
                        $track={cell?.track}
                      >
                        {cell?.text}
                      </Cell>
                    );
                  }),
                ];
              })}
            </SheetGrid>

            <CursorMark>
              <Ic w={16} h={16} c="#111" sw={1.5}>
                <path d="M6 1.5h4v4.500h4.500v4H10v4.500H6V10H1.500V6H6z" fill="#fff" />
                <path d="M8 6.500v3M6.500 8h3" />
              </Ic>
            </CursorMark>

            <NoteBox>
              <NoteLead>Long Butterfly Spread</NoteLead>
              {" - Use it when you think the stock\nprice won't change very much.  Using call options,\nyou buy a call with an exercise price of $20, write\ntwo calls with an exercise price of $25 and buy a\nthird call with an exercise price of $30."}
            </NoteBox>

            <ChartBox>
              <ChartTitle>Butterfly Spread</ChartTitle>
              <ChartPlot width="420" height="160" viewBox="0 0 420 160" fill="none">
                {[0, 41, 81].map((d, i) => (
                  <g key={d}>
                    <text x="15" y={47 + d} fill="#595959" fontSize="11.5" fontFamily="Liberation Sans, sans-serif">
                      {["$5.00", "$4.00", "$3.00"][i]}
                    </text>
                    <path d={`M58 ${43 + d}H420`} stroke="#dedede" />
                  </g>
                ))}
                <path d="M268 160L290 64L312 160" stroke="#eec21a" strokeWidth="3" />
              </ChartPlot>
            </ChartBox>
          </SheetViewport>
          <VScroll>
            <ScrollTop>
              <ScrollButton>
                <Ic w={7} h={4} c="#444">
                  <path d="M0 4h7L3.5 0z" fill="#444" stroke="none" />
                </Ic>
              </ScrollButton>
              <ScrollThumb />
            </ScrollTop>
            <ScrollButton>
              <Ic w={7} h={4} c="#444">
                <path d="M0 0h7L3.5 4z" fill="#444" stroke="none" />
              </Ic>
            </ScrollButton>
          </VScroll>
        </SheetArea>

        <SheetTabs>
          <TabNav>
            <span>◂</span>
            <span>▸</span>
          </TabNav>
          {sheetTabs.map(([name, w]) => (
            <SheetTab key={name} $w={w}>
              {name}
            </SheetTab>
          ))}
          <SheetTab $w={120} $active>
            Butterfly Spread
          </SheetTab>
          <AddSheet>
            <AddCircle>
              <Plus size={11} />
            </AddCircle>
          </AddSheet>
          <HScroll>
            <HButton>◂</HButton>
            <HThumb />
            <HTrack />
            <HButton>▸</HButton>
          </HScroll>
        </SheetTabs>

        <StatusBar>
          Ready
          <Accessibility>
            <Ic w={14} h={14} c="#555">
              <path d="M7 .5a2 2 0 1 1-.01 0M1 5h12M7 5v4M7 9l-4 4M7 9l4 4" />
            </Ic>
            Accessibility: Investigate
          </Accessibility>
          <StatusRight>
            <ViewButton $on>
              <Ic w={13} h={13}>
                <path d="M.5.5h12v12H.5zM4.5.5v12M8.5.5v12M.5 4.5h12M.5 8.5h12" />
              </Ic>
            </ViewButton>
            <ViewButton>
              <Ic w={13} h={13}>
                <path d="M.5.5h12v12H.5zM3.5 3.5h6v6h-6zM3.5 5.5h6M3.5 7.5h6" />
              </Ic>
            </ViewButton>
            <ViewButton>
              <Ic w={13} h={13}>
                <path d="M.5.5h12v9h-12zM5.5.5v5h3V.5" />
              </Ic>
            </ViewButton>
            <Zoomer>
              −
              <ZoomTrack>
                <ZoomThumb />
              </ZoomTrack>
              <ZoomPlus>+</ZoomPlus>
            </Zoomer>
            <ZoomValue>110%</ZoomValue>
          </StatusRight>
        </StatusBar>

        <Taskbar>
          <TaskSlot $w={46}>
            <TaskIcon $c="#fff" $w={10} />
          </TaskSlot>
          <TaskSearch>
            <TaskSearchGlass />
          </TaskSearch>
          <TaskSlot $w={48}>
            <TaskIcon $c="#e6b84a" />
          </TaskSlot>
          <TaskSlot $w={48}>
            <TaskIcon $c="#d9764a" $round />
          </TaskSlot>
          <TaskSlot $w={48} $on>
            <TaskIcon $c="#1eb26a" />
          </TaskSlot>
          <TaskSlot $w={48}>
            <TaskIcon $c="#3a8fdc" />
          </TaskSlot>
          <TaskSlot $w={48}>
            <TaskIcon $c="#d43a2f" $round />
          </TaskSlot>
          <TaskSlot $w={48}>
            <TaskIcon $c="#f0d232" $w={10} />
          </TaskSlot>
          <TaskSlot $w={48}>
            <TaskIcon $c="#a8c47a" />
          </TaskSlot>
          <TaskSlot $w={48}>
            <TaskIcon $c="#8a8a8a" $w={8} $round />
          </TaskSlot>
          <TaskSlot $w={108}>
            <TaskIcon $c="#e0a640" $w={8} />
          </TaskSlot>
          <TaskSlot $w={104}>
            <TaskIcon $c="#eee" $w={10} />
          </TaskSlot>
          <TaskSlot $w={18}>
            <TaskIcon $c="#eee" $w={6} />
          </TaskSlot>
          <TaskSlot $w={44}>
            <TaskIcon $c="#eee" $w={12} />
          </TaskSlot>
          <Clock>8:04 PM</Clock>
          <TaskSlot $w={34}>
            <TaskIcon $c="#fff" $w={14} />
          </TaskSlot>
        </Taskbar>
      </Excel>
    </Screen>
  );
}
